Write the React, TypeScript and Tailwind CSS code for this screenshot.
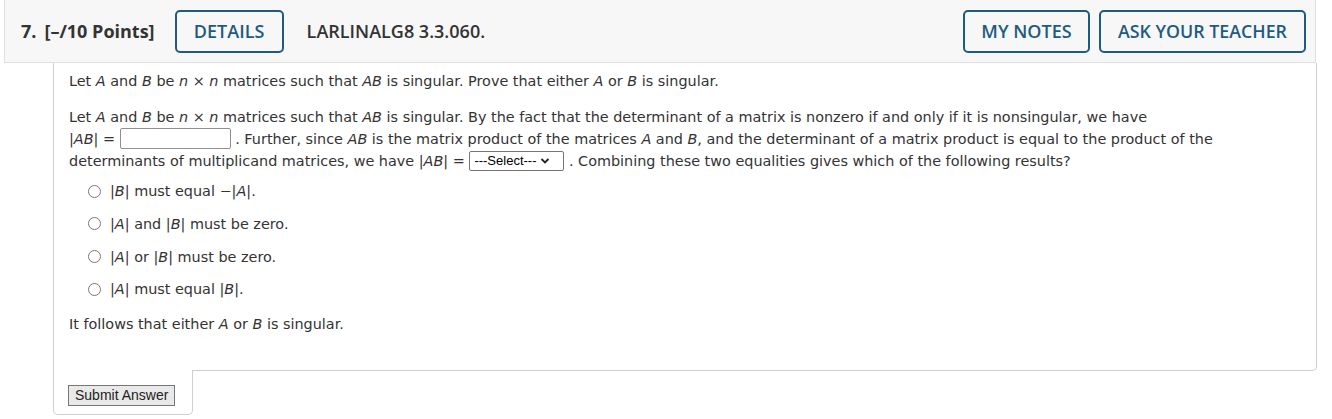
import React from "react";

const V = { fontFamily: '"DejaVu Sans", Verdana, sans-serif' };
const O = { fontFamily: '"Open Sans", sans-serif' };

function I({ children }: { children: React.ReactNode }) {
  return <i>{children}</i>;
}

function Radio({ children }: { children: React.ReactNode }) {
  return (
    <div className="flex items-center h-[32.67px]">
      <span className="w-[13px] h-[13px] rounded-full border border-[#767676] bg-white ml-[24px] mr-[9px]"></span>
      <span>{children}</span>
    </div>
  );
}

export default function App() {
  return (
    <div className="w-[1332px] h-[419px] bg-white text-[#333]">
      <div className="ml-[4px] w-[1312px] h-[63px] bg-[#f7f7f7] border-l border-r border-b border-[#e0e0e0] flex items-center" style={O}>
        <span className="ml-[16px] text-[18px] font-bold text-[#333]">7.</span>
        <span className="ml-[8px] text-[18px] font-bold text-[#333]">[–/10 Points]</span>
        <button className="ml-[20px] h-[43px] w-[109px] border-2 border-[#1e5b82] rounded-[5px] text-[18px] font-semibold text-[#1e5b82] bg-transparent">DETAILS</button>
        <span className="ml-[23px] text-[18px] font-semibold text-[#333]">LARLINALG8 3.3.060.</span>
        <div className="flex-1"></div>
        <button className="h-[43px] w-[127px] border-2 border-[#1e5b82] rounded-[5px] text-[18px] font-semibold text-[#1e5b82]">MY NOTES</button>
        <button className="ml-[9px] mr-[9px] h-[43px] w-[207px] border-2 border-[#1e5b82] rounded-[5px] text-[17.8px] font-semibold text-[#1e5b82]">ASK YOUR TEACHER</button>
      </div>
      <div className="ml-[53px] w-[1264px]">
        <div className="border-l border-r border-b border-[#cfcfcf] rounded-br-[5px] h-[308px] pl-[15px] pt-[7px] text-[14.4px] leading-[22px] text-[#333]" style={V}>
          <p>Let <I>A</I> and <I>B</I> be <I>n</I> × <I>n</I> matrices such that <I>AB</I> is singular. Prove that either <I>A</I> or <I>B</I> is singular.</p>
          <p className="mt-[14px] pr-[40px]">
            Let <I>A</I> and <I>B</I> be <I>n</I> × <I>n</I> matrices such that <I>AB</I> is singular. By the fact that the determinant of a matrix is nonzero if and only if it is nonsingular, we have
            <br />
            |<I>AB</I>| ={" "}
            <span className="inline-block align-middle w-[111px] h-[21px] border border-[#8f8f8f] rounded-[2px] bg-white -mt-[3px]"></span>
            {" "}. Further, since <I>AB</I> is the matrix product of the matrices <I>A</I> and <I>B</I>, and the determinant of a matrix product is equal to the product of the
            <br />
            determinants of multiplicand matrices, we have |<I>AB</I>| ={" "}
            <span className="inline-flex items-center align-middle h-[20px] w-[95px] border border-[#767676] rounded-[2px] bg-white pl-[4px] -mt-[3px] text-[13px] text-black" style={{ fontFamily: '"Liberation Sans", Arial, sans-serif' }}>
              ---Select---
              <svg width="10" height="8" viewBox="0 0 10 8" className="ml-[4px]"><path d="M1.5 2 L5 5.5 L8.5 2" stroke="#222" strokeWidth="1.8" fill="none" /></svg>
            </span>
            {" "}. Combining these two equalities gives which of the following results?
          </p>
          <div className="mt-[3px] -ml-[5px]">
            <Radio>|<I>B</I>| must equal −|<I>A</I>|.</Radio>
            <Radio>|<I>A</I>| and |<I>B</I>| must be zero.</Radio>
            <Radio>|<I>A</I>| or |<I>B</I>| must be zero.</Radio>
            <Radio>|<I>A</I>| must equal |<I>B</I>|.</Radio>
          </div>
          <p className="mt-[7px]">It follows that either <I>A</I> or <I>B</I> is singular.</p>
        </div>
        <div className="-mt-px w-[140px] h-[45px] bg-white border-l border-r border-b border-[#cfcfcf] rounded-b-[5px] flex items-start pl-[14px] pt-[15px]">
          <button className="h-[21px] px-[6px] bg-[#e9e9e9] border border-[#767676] text-[14px] text-[#222] leading-[19px]" style={{ fontFamily: '"Liberation Sans", Arial, sans-serif' }}>Submit Answer</button>
        </div>
      </div>
    </div>
  );
}
